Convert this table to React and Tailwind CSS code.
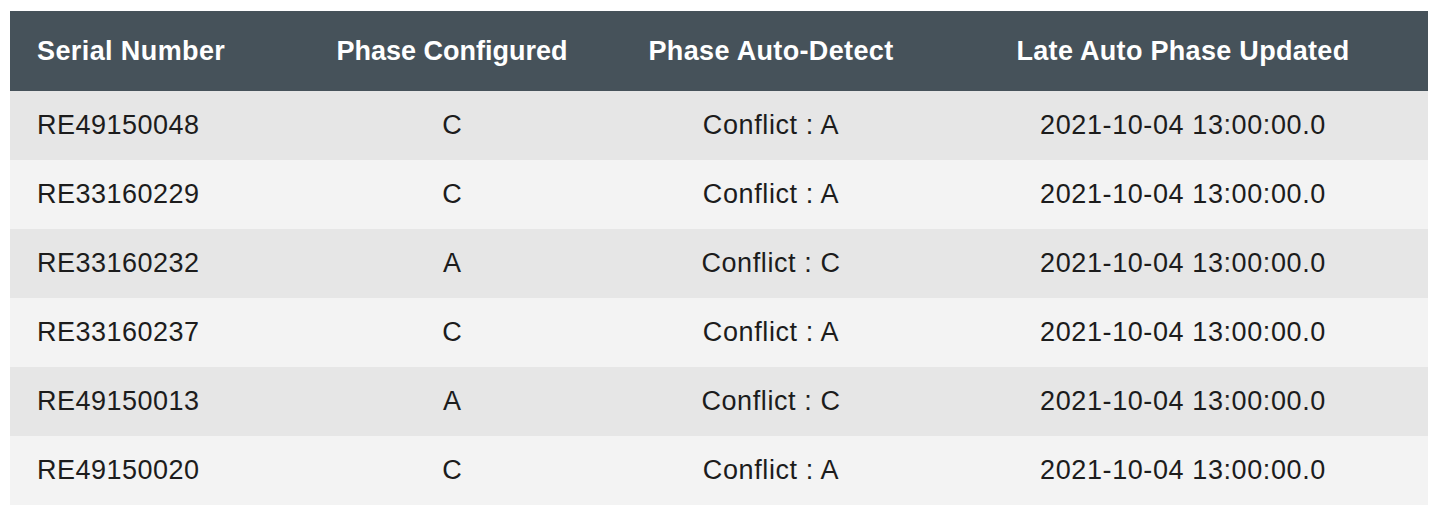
import React from "react";

const rows = [
  ["RE49150048", "C", "Conflict : A"],
  ["RE33160229", "C", "Conflict : A"],
  ["RE33160232", "A", "Conflict : C"],
  ["RE33160237", "C", "Conflict : A"],
  ["RE49150013", "A", "Conflict : C"],
  ["RE49150020", "C", "Conflict : A"],
];

export default function App() {
  return (
    <div className="w-[1440px] h-[515px] bg-white pt-[11px] pl-[10px]" style={{ fontFamily: '"Liberation Sans", Arial, sans-serif' }}>
      <div className="w-[1418px]">
        <div className="grid grid-cols-[290px_304px_334px_490px] h-[80px] items-center bg-[#46525a] text-white font-bold text-[27px]">
          <div className="pl-[27px] tracking-[0.4px]">Serial Number</div>
          <div className="text-center">Phase Configured</div>
          <div className="text-center tracking-[0.35px]">Phase Auto-Detect</div>
          <div className="text-center tracking-[0.3px]">Late Auto Phase Updated</div>
        </div>
        {rows.map((r, i) => (
          <div
            key={i}
            className={`grid grid-cols-[290px_304px_334px_490px] h-[69px] items-center text-[27px] text-[#1c1c1c] ${i % 2 === 0 ? "bg-[#e6e6e6]" : "bg-[#f3f3f3]"}`}
          >
            <div className="pl-[27px] tracking-[0.5px]">{r[0]}</div>
            <div className="text-center">{r[1]}</div>
            <div className="text-center tracking-[0.6px]">{r[2]}</div>
            <div className="text-center tracking-[0.6px]">2021-10-04 13:00:00.0</div>
          </div>
        ))}
      </div>
    </div>
  );
}
